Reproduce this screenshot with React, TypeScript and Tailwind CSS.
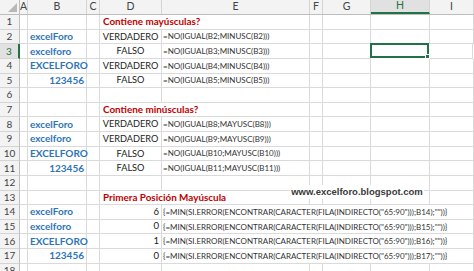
import React from 'react';

const cols = ['A', 'B', 'C', 'D', 'E', 'F', 'G', 'H', 'I'];

type Cell = { text: string; span?: number; kind?: 'blue' | 'blueR' | 'red' | 'center' | 'right' | 'formula' };
type Row = Record<string, Cell>;

const f1 = (n: number) => `=NO(IGUAL(B${n};MINUSC(B${n})))`;
const f2 = (n: number) => `=NO(IGUAL(B${n};MAYUSC(B${n})))`;
const f3 = (n: number) => `{=MIN(SI.ERROR(ENCONTRAR(CARACTER(FILA(INDIRECTO("65:90")));B${n});""))}`;

const names = ['excelForo', 'excelforo', 'EXCELFORO'];

const rows: Row[] = [
  { D: { text: 'Contiene mayúsculas?', span: 2, kind: 'red' } },
  { B: { text: names[0], kind: 'blue' }, D: { text: 'VERDADERO', kind: 'center' }, E: { text: f1(2), kind: 'formula' } },
  { B: { text: names[1], kind: 'blue' }, D: { text: 'FALSO', kind: 'center' }, E: { text: f1(3), kind: 'formula' } },
  { B: { text: names[2], kind: 'blue' }, D: { text: 'VERDADERO', kind: 'center' }, E: { text: f1(4), kind: 'formula' } },
  { B: { text: '123456', kind: 'blueR' }, D: { text: 'FALSO', kind: 'center' }, E: { text: f1(5), kind: 'formula' } },
  {},
  { D: { text: 'Contiene minúsculas?', span: 2, kind: 'red' } },
  { B: { text: names[0], kind: 'blue' }, D: { text: 'VERDADERO', kind: 'center' }, E: { text: f2(8), kind: 'formula' } },
  { B: { text: names[1], kind: 'blue' }, D: { text: 'VERDADERO', kind: 'center' }, E: { text: f2(9), kind: 'formula' } },
  { B: { text: names[2], kind: 'blue' }, D: { text: 'FALSO', kind: 'center' }, E: { text: f2(10), kind: 'formula' } },
  { B: { text: '123456', kind: 'blueR' }, D: { text: 'FALSO', kind: 'center' }, E: { text: f2(11), kind: 'formula' } },
  {},
  { D: { text: 'Primera Posición Mayúscula', span: 2, kind: 'red' } },
  { B: { text: names[0], kind: 'blue' }, D: { text: '6', kind: 'right' }, E: { text: f3(14), span: 5, kind: 'formula' } },
  { B: { text: names[1], kind: 'blue' }, D: { text: '0', kind: 'right' }, E: { text: f3(15), span: 5, kind: 'formula' } },
  { B: { text: names[2], kind: 'blue' }, D: { text: '1', kind: 'right' }, E: { text: f3(16), span: 5, kind: 'formula' } },
  { B: { text: '123456', kind: 'blueR' }, D: { text: '0', kind: 'right' }, E: { text: f3(17), span: 5, kind: 'formula' } },
  {},
];

const kindClass: Record<string, string> = {
  blue: 'font-bold text-[#2e75b6] text-[10px] pl-[2px]',
  blueR: 'font-bold text-[#2e75b6] text-[10px] justify-end pr-[2px]',
  red: 'font-bold text-[#c00000] text-[9.9px] pl-[3px]',
  center: 'justify-center text-[#222] text-[9.2px]',
  right: 'justify-end text-[#222] text-[9.6px] pr-[2px]',
  formula: 'text-[#333] text-[8px] pl-[1px]',
};

const widths = ['w-[8px]', 'w-[59px]', 'w-[13px]', 'w-[62px]', 'w-[148px]', 'w-[13px]', 'w-[48px]', 'w-[59px]', 'w-[44px]'];
const spanWidths: Record<string, string> = {
  D2: 'w-[210px]',
  E5: 'w-[312px]',
};

function SheetRow({ n, row }: { n: number; row: Row }) {
  const sel = n === 3;
  const out: React.ReactNode[] = [];
  let i = 0;
  while (i < cols.length) {
    const c = cols[i];
    const cell = row[c];
    const span = cell?.span ?? 1;
    const w = span > 1 ? spanWidths[c + span] : widths[i];
    const active = sel && c === 'H';
    out.push(
      <div
        key={c}
        className={`${w} shrink-0 h-full flex items-center whitespace-nowrap overflow-visible ${
          active ? 'relative -ml-px -mt-px h-[16px] border-2 border-[#217346] z-10' : 'border-r border-b border-[#dadada]'
        } ${cell ? kindClass[cell.kind ?? 'center'] : ''}`}
      >
        {cell?.text}
        {active && <div className="absolute -right-[3px] -bottom-[3px] w-[5px] h-[5px] bg-[#217346] border border-white" />}
      </div>
    );
    i += span;
  }
  return (
    <div className="flex h-[14.625px]">
      <div
        className={`w-[20px] shrink-0 h-full flex items-center justify-center text-[10px] border-b border-[#d4d4d4] ${
          sel ? 'bg-[#e1e1e1] text-[#217346] border-r-2 border-r-[#217346]' : 'bg-[#f3f3f3] text-[#444] border-r border-r-[#bdbdbd]'
        }`}
      >
        {n}
      </div>
      {out}
    </div>
  );
}

export default function App() {
  return (
    <div className="relative w-[474px] h-[271px] overflow-hidden bg-white font-['Lato','Open_Sans',sans-serif]">
      <div className="flex h-[15px] bg-[#f3f3f3] border-b border-[#bdbdbd] text-[10.5px] text-[#444]">
        <div className="w-[20px] shrink-0 h-full relative border-r border-[#bdbdbd]">
          <div className="absolute right-[2px] bottom-[2px] w-0 h-0 border-l-[9px] border-l-transparent border-b-[9px] border-b-[#b8b8b8]" />
        </div>
        {cols.map((c, i) => (
          <div
            key={c}
            className={`${widths[i]} shrink-0 h-full flex items-center justify-center border-r border-[#d4d4d4] ${
              c === 'H' ? 'bg-[#e1e1e1] text-[#217346] border-b-2 border-b-[#217346]' : ''
            }`}
          >
            {c}
          </div>
        ))}
      </div>
      {rows.map((r, i) => (
        <SheetRow key={i} n={i + 1} row={r} />
      ))}

      {/* floating text box over the grid */}
      <div className="absolute left-[290px] top-[185px] w-[134px] h-[14px] bg-white flex items-center justify-center font-['Liberation_Sans',Arial,sans-serif] font-bold text-[9.5px] text-[#3a3a3a]">
        www.excelforo.blogspot.com
      </div>
    </div>
  );
}
